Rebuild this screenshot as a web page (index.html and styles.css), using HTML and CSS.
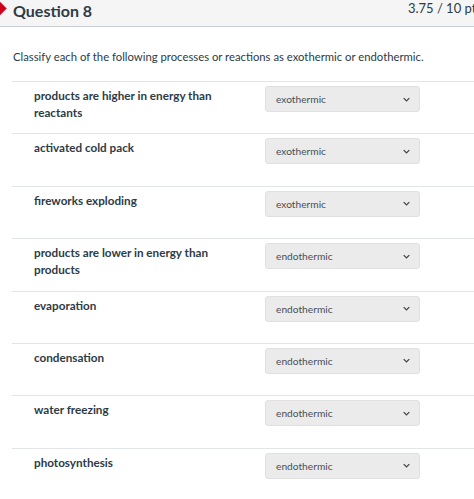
FILE: index.html
```html
<!DOCTYPE html>
<html lang="en">
<head>
    <meta charset="UTF-8">
    <title>Question 8</title>
    <link rel="stylesheet" href="styles.css">
</head>
<body>
    <div class="question">
        <div class="header">
            <span class="flag"></span>
            <span class="title">Question 8</span>
            <span class="points">3.75 / 10 pts</span>
        </div>
        <div class="body">
            <p class="prompt">Classify each of the following processes or reactions as exothermic or endothermic.</p>
            <div class="rows">
                <div class="row">
                    <div class="label">products are higher in energy than reactants</div>
                    <div class="select"><span>exothermic</span><svg class="chev" viewBox="0 0 10 6"><path d="M1 1l4 4 4-4" /></svg></div>
                </div>
                <div class="row">
                    <div class="label">activated cold pack</div>
                    <div class="select"><span>exothermic</span><svg class="chev" viewBox="0 0 10 6"><path d="M1 1l4 4 4-4" /></svg></div>
                </div>
                <div class="row">
                    <div class="label">fireworks exploding</div>
                    <div class="select"><span>exothermic</span><svg class="chev" viewBox="0 0 10 6"><path d="M1 1l4 4 4-4" /></svg></div>
                </div>
                <div class="row">
                    <div class="label">products are lower in energy than products</div>
                    <div class="select"><span>endothermic</span><svg class="chev" viewBox="0 0 10 6"><path d="M1 1l4 4 4-4" /></svg></div>
                </div>
                <div class="row">
                    <div class="label">evaporation</div>
                    <div class="select"><span>endothermic</span><svg class="chev" viewBox="0 0 10 6"><path d="M1 1l4 4 4-4" /></svg></div>
                </div>
                <div class="row">
                    <div class="label">condensation</div>
                    <div class="select"><span>endothermic</span><svg class="chev" viewBox="0 0 10 6"><path d="M1 1l4 4 4-4" /></svg></div>
                </div>
                <div class="row">
                    <div class="label">water freezing</div>
                    <div class="select"><span>endothermic</span><svg class="chev" viewBox="0 0 10 6"><path d="M1 1l4 4 4-4" /></svg></div>
                </div>
                <div class="row">
                    <div class="label">photosynthesis</div>
                    <div class="select"><span>endothermic</span><svg class="chev" viewBox="0 0 10 6"><path d="M1 1l4 4 4-4" /></svg></div>
                </div>
            </div>
        </div>
    </div>
</body>
</html>
```

FILE: styles.css
```css
body {
    margin: 0;
    font-family: Lato, "Open Sans", sans-serif;
    color: #2d3b45;
    background: #fff;
    overflow: hidden;
}
.question {
    width: 490px;
}
.header {
    position: relative;
    display: flex;
    align-items: flex-start;
    height: 26px;
    background: #f5f5f5;
    border-bottom: 1px solid #c7cdd1;
    overflow: hidden;
}
.flag {
    position: absolute;
    left: -9px;
    top: 2px;
    width: 13px;
    height: 13px;
    background: #d0021b;
    transform: rotate(45deg);
}
.title {
    font-size: 16px;
    font-weight: 700;
    margin: 1px 0 0 13px;
    line-height: 19px;
}
.points {
    margin-left: auto;
    margin-right: 8px;
    font-size: 13px;
    line-height: 16px;
    margin-top: 0;
    color: #2d3b45;
}
.body {
    padding: 21px 0 0 12px;
}
.prompt {
    margin: 0 0 15px 1px;
    font-size: 11.3px;
    line-height: 18px;
}
.row {
    display: flex;
    align-items: flex-start;
    height: 52.4px;
    box-sizing: border-box;
    border-top: 1px solid #e2e5e7;
    padding-top: 4px;
}
.label {
    width: 200px;
    padding: 1px 0 0 22px;
    font-size: 11.7px;
    font-weight: 700;
    line-height: 16.5px;
}
.select {
    display: flex;
    align-items: center;
    margin-left: 31px;
    width: 155px;
    height: 26px;
    box-sizing: border-box;
    padding: 0 9px 0 10px;
    background: #ebebeb;
    border: 1px solid #e0e0e0;
    border-radius: 3px;
    font-size: 10.2px;
    color: #4a4f53;
}
.select span {
    flex: 1;
}
.chev {
    width: 7px;
    height: 5px;
    fill: none;
    stroke: #444;
    stroke-width: 1.8;
}
```
